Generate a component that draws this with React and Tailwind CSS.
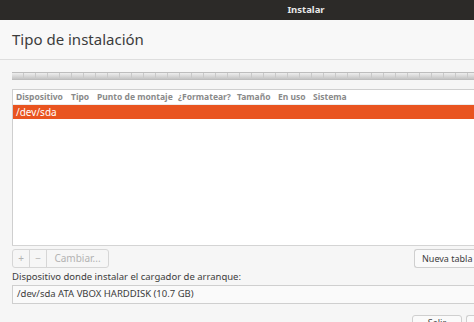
import React from 'react';

const font = { fontFamily: '"Noto Sans", "Open Sans", sans-serif' };

const columns = [
  { label: 'Dispositivo', w: 'w-[55px]' },
  { label: 'Tipo', w: 'w-[26px]' },
  { label: 'Punto de montaje', w: 'w-[81px]' },
  { label: '¿Formatear?', w: 'w-[59px]' },
  { label: 'Tamaño', w: 'w-[41px]' },
  { label: 'En uso', w: 'w-[35px]' },
  { label: 'Sistema', w: 'w-[50px]' },
];

const PartitionBar = () => (
  <div className="h-[8px] ml-[12px] border-y border-[#bdbdbd] bg-gradient-to-b from-[#eeeeee] via-[#d9d9d9] to-[#c4c4c4] flex">
    {Array.from({ length: 38 }).map((_, i) => (
      <div key={i} className="w-[12px] shrink-0 border-r border-[#c9c9c9]" />
    ))}
  </div>
);

const App = () => {
  return (
    <div className="w-[474px] h-[322px] overflow-hidden bg-[#f6f6f6] flex flex-col" style={font}>
      {/* title bar */}
      <div className="h-[20px] bg-[#2c2a28] flex items-center justify-center pl-[138px] shrink-0">
        <span className="text-[9.5px] font-bold text-[#e8e8e8]">Instalar</span>
      </div>

      {/* header */}
      <div className="h-[40px] bg-[#f8f8f8] border-b border-[#dedede] flex items-center px-[12px] shrink-0">
        <h1 className="text-[15px] text-[#3c3c3c] leading-none">Tipo de instalación</h1>
      </div>

      <div className="flex flex-col pt-[12px]">
        <PartitionBar />

        {/* partition table */}
        <div className="mt-[9px] ml-[12px] h-[156px] border-l border-t border-[#cfcfcf] bg-white flex flex-col">
          <div className="h-[15px] flex items-center pl-[3px] text-[8.5px] font-bold text-[#8a8a8a] border-b border-[#ececec]">
            {columns.map((c) => (
              <span key={c.label} className={`${c.w} shrink-0 whitespace-nowrap`}>{c.label}</span>
            ))}
          </div>
          <div className="h-[14px] bg-[#e95420] flex items-center pl-[3px] text-[10px] text-white">
            /dev/sda
          </div>
          <div className="flex-1" />
        </div>
        <div className="ml-[12px] border-t border-[#d4d4d4]" />

        {/* toolbar */}
        <div className="mt-[3px] h-[19px] pl-[12px] flex items-center justify-between">
          <div className="flex h-[19px] border border-[#d6d6d6] rounded-[3px] bg-[#f6f6f6] text-[#b3b3b3] text-[10px]">
            <span className="w-[17px] flex items-center justify-center border-r border-[#d6d6d6]">+</span>
            <span className="w-[17px] flex items-center justify-center border-r border-[#d6d6d6]">−</span>
            <span className="w-[61px] flex items-center justify-center">Cambiar...</span>
          </div>
          <div className="h-[19px] w-[60px] border border-r-0 border-[#cfcfcf] rounded-l-[3px] bg-[#fafafa] flex items-center pl-[7px] text-[9px] text-[#3c3c3c] whitespace-nowrap">
            Nueva tabla
          </div>
        </div>

        {/* bootloader */}
        <div className="mt-[2px] pl-[12px] text-[9.5px] text-[#3c3c3c] leading-[14px]">
          Dispositivo donde instalar el cargador de arranque:
        </div>
        <div className="mt-[1px] ml-[12px] h-[19px] border border-r-0 border-[#cfcfcf] bg-[#fafafa] flex items-center pl-[4px] text-[9.5px] text-[#3c3c3c]">
          /dev/sda ATA VBOX HARDDISK (10.7 GB)
        </div>

        {/* bottom buttons */}
        <div className="mt-[11px] flex justify-end gap-[4px]">
          <div className="h-[19px] w-[50px] border border-[#cfcfcf] rounded-[3px] bg-[#fafafa] flex items-start justify-center pt-[2px] text-[9px] leading-[9px] text-[#3c3c3c]">
            Salir
          </div>
          <div className="h-[19px] w-[8px] border border-r-0 border-[#cfcfcf] rounded-l-[3px] bg-[#fafafa]" />
        </div>
      </div>
    </div>
  );
};

export default App;
